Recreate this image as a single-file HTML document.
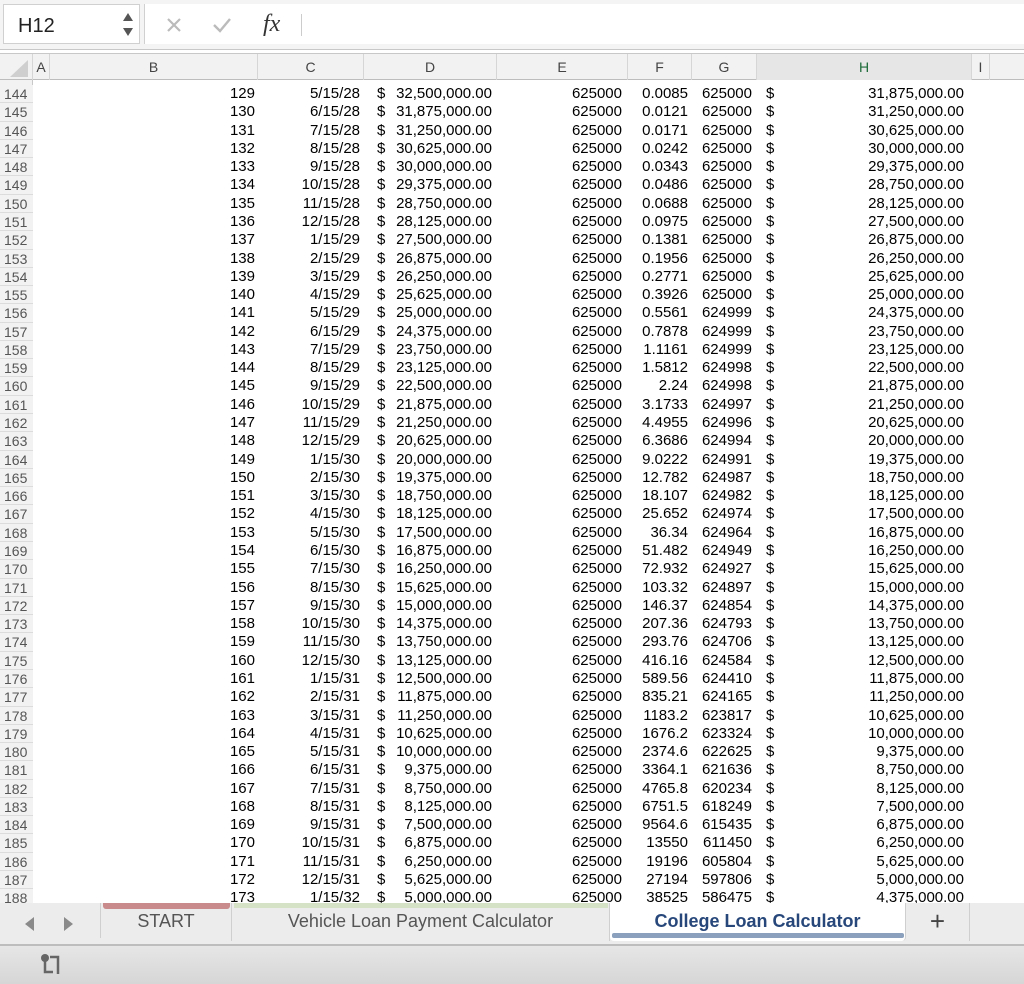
<!DOCTYPE html>
<html><head><meta charset="utf-8"><style>
*{margin:0;padding:0;box-sizing:border-box}
body{width:1024px;height:984px;overflow:hidden;background:#fff;font-family:"Liberation Sans",Arial,sans-serif;position:relative}
#fb{position:absolute;left:0;top:0;width:1024px;height:50px;background:#f4f4f4;border-bottom:1px solid #c8c8c8}
#nb{position:absolute;left:3px;top:4px;width:137px;height:40px;background:#fff;border:1px solid #d0d0d0}
#nb span{position:absolute;left:14px;top:10px;font-size:20px;color:#222}
#fx{position:absolute;left:144px;top:4px;width:880px;height:40px;background:#fff;border-left:1px solid #d0d0d0}
#hdr{position:absolute;left:0;top:53px;width:1024px;height:27px;background:#f2f2f2;border-top:1px solid #c8c8c8;border-bottom:1px solid #bdbdbd}
.ch{position:absolute;top:0;height:26px;line-height:26px;text-align:center;font-size:14px;color:#444;border-right:1px solid #d6d6d6}
#rh{position:absolute;left:0;top:80px;width:33px;height:823px;background:#f2f2f2;border-right:1px solid #c8c8c8}
.r{position:absolute;left:0;width:1024px;height:18.28px;font-size:15px;line-height:18px;color:#000;white-space:pre}
.r span{position:absolute;top:0}
.n{left:0;width:33px;padding-left:4px;color:#555;font-size:14px;border-bottom:1px solid #dcdcdc;height:18.28px;background:#f2f2f2}
.b{left:50px;width:205px;text-align:right}
.c{left:258px;width:102px;text-align:right}
.d1{left:377px}
.d{left:364px;width:128px;text-align:right}
.e{left:497px;width:125px;text-align:right}
.f{left:628px;width:60px;text-align:right}
.g{left:692px;width:60px;text-align:right}
.h1{left:766px}
.h{left:757px;width:207px;text-align:right}
#tabs{position:absolute;left:0;top:903px;width:1024px;height:43px;background:#ececec;border-bottom:2px solid #bdbdbd}
.tab{position:absolute;top:0;height:38px;font-size:18px;color:#555;text-align:center;line-height:36px;border-right:1px solid #cfcfcf}
#status{position:absolute;left:0;top:946px;width:1024px;height:38px;background:linear-gradient(#e6e6e6,#d6d6d6)}
</style></head><body>
<div id="fb">
<div id="nb"><span>H12</span>
<svg style="position:absolute;left:117px;top:6px" width="14" height="28"><path d="M7 2 L12 10 L2 10Z" fill="#555"/><path d="M7 25 L12 17 L2 17Z" fill="#555"/></svg></div>
<div id="fx">
<svg style="position:absolute;left:20px;top:12px" width="18" height="18"><path d="M3 3 L15 15 M15 3 L3 15" stroke="#bbb" stroke-width="2.2"/></svg>
<svg style="position:absolute;left:66px;top:12px" width="22" height="18"><path d="M3 9 L9 15 L19 3" stroke="#bbb" stroke-width="2.4" fill="none"/></svg>
<span style="position:absolute;left:118px;top:7px;font-family:'Liberation Serif',serif;font-style:italic;font-size:24px;color:#333">fx</span>
<div style="position:absolute;left:156px;top:10px;width:1px;height:22px;background:#ccc"></div>
</div></div>
<div id="hdr">
<div class="ch" style="left:0;width:33px"><svg width="33" height="26"><path d="M28 6 L28 23 L10 23Z" fill="#cfcfcf"/></svg></div>
<div class="ch" style="left:33px;width:17px">A</div>
<div class="ch" style="left:50px;width:208px">B</div>
<div class="ch" style="left:258px;width:106px">C</div>
<div class="ch" style="left:364px;width:133px">D</div>
<div class="ch" style="left:497px;width:131px">E</div>
<div class="ch" style="left:628px;width:64px">F</div>
<div class="ch" style="left:692px;width:65px">G</div>
<div class="ch" style="left:757px;width:215px;background:#e6e6e6;color:#1e6b3a">H</div>
<div class="ch" style="left:972px;width:18px">I</div>
</div>
<div id="rh"></div>
<div id="rows" style="position:absolute;left:0;top:85px;width:1024px;height:818px;overflow:hidden">
<div class="r" style="top:0px"><span class="n">144</span><span class="b">129</span><span class="c">5/15/28</span><span class="d1">$</span><span class="d">32,500,000.00</span><span class="e">625000</span><span class="f">0.0085</span><span class="g">625000</span><span class="h1">$</span><span class="h">31,875,000.00</span></div>
<div class="r" style="top:18.28px"><span class="n">145</span><span class="b">130</span><span class="c">6/15/28</span><span class="d1">$</span><span class="d">31,875,000.00</span><span class="e">625000</span><span class="f">0.0121</span><span class="g">625000</span><span class="h1">$</span><span class="h">31,250,000.00</span></div>
<div class="r" style="top:36.56px"><span class="n">146</span><span class="b">131</span><span class="c">7/15/28</span><span class="d1">$</span><span class="d">31,250,000.00</span><span class="e">625000</span><span class="f">0.0171</span><span class="g">625000</span><span class="h1">$</span><span class="h">30,625,000.00</span></div>
<div class="r" style="top:54.84px"><span class="n">147</span><span class="b">132</span><span class="c">8/15/28</span><span class="d1">$</span><span class="d">30,625,000.00</span><span class="e">625000</span><span class="f">0.0242</span><span class="g">625000</span><span class="h1">$</span><span class="h">30,000,000.00</span></div>
<div class="r" style="top:73.12px"><span class="n">148</span><span class="b">133</span><span class="c">9/15/28</span><span class="d1">$</span><span class="d">30,000,000.00</span><span class="e">625000</span><span class="f">0.0343</span><span class="g">625000</span><span class="h1">$</span><span class="h">29,375,000.00</span></div>
<div class="r" style="top:91.4px"><span class="n">149</span><span class="b">134</span><span class="c">10/15/28</span><span class="d1">$</span><span class="d">29,375,000.00</span><span class="e">625000</span><span class="f">0.0486</span><span class="g">625000</span><span class="h1">$</span><span class="h">28,750,000.00</span></div>
<div class="r" style="top:109.68px"><span class="n">150</span><span class="b">135</span><span class="c">11/15/28</span><span class="d1">$</span><span class="d">28,750,000.00</span><span class="e">625000</span><span class="f">0.0688</span><span class="g">625000</span><span class="h1">$</span><span class="h">28,125,000.00</span></div>
<div class="r" style="top:127.96px"><span class="n">151</span><span class="b">136</span><span class="c">12/15/28</span><span class="d1">$</span><span class="d">28,125,000.00</span><span class="e">625000</span><span class="f">0.0975</span><span class="g">625000</span><span class="h1">$</span><span class="h">27,500,000.00</span></div>
<div class="r" style="top:146.24px"><span class="n">152</span><span class="b">137</span><span class="c">1/15/29</span><span class="d1">$</span><span class="d">27,500,000.00</span><span class="e">625000</span><span class="f">0.1381</span><span class="g">625000</span><span class="h1">$</span><span class="h">26,875,000.00</span></div>
<div class="r" style="top:164.52px"><span class="n">153</span><span class="b">138</span><span class="c">2/15/29</span><span class="d1">$</span><span class="d">26,875,000.00</span><span class="e">625000</span><span class="f">0.1956</span><span class="g">625000</span><span class="h1">$</span><span class="h">26,250,000.00</span></div>
<div class="r" style="top:182.8px"><span class="n">154</span><span class="b">139</span><span class="c">3/15/29</span><span class="d1">$</span><span class="d">26,250,000.00</span><span class="e">625000</span><span class="f">0.2771</span><span class="g">625000</span><span class="h1">$</span><span class="h">25,625,000.00</span></div>
<div class="r" style="top:201.08px"><span class="n">155</span><span class="b">140</span><span class="c">4/15/29</span><span class="d1">$</span><span class="d">25,625,000.00</span><span class="e">625000</span><span class="f">0.3926</span><span class="g">625000</span><span class="h1">$</span><span class="h">25,000,000.00</span></div>
<div class="r" style="top:219.36px"><span class="n">156</span><span class="b">141</span><span class="c">5/15/29</span><span class="d1">$</span><span class="d">25,000,000.00</span><span class="e">625000</span><span class="f">0.5561</span><span class="g">624999</span><span class="h1">$</span><span class="h">24,375,000.00</span></div>
<div class="r" style="top:237.64px"><span class="n">157</span><span class="b">142</span><span class="c">6/15/29</span><span class="d1">$</span><span class="d">24,375,000.00</span><span class="e">625000</span><span class="f">0.7878</span><span class="g">624999</span><span class="h1">$</span><span class="h">23,750,000.00</span></div>
<div class="r" style="top:255.92px"><span class="n">158</span><span class="b">143</span><span class="c">7/15/29</span><span class="d1">$</span><span class="d">23,750,000.00</span><span class="e">625000</span><span class="f">1.1161</span><span class="g">624999</span><span class="h1">$</span><span class="h">23,125,000.00</span></div>
<div class="r" style="top:274.2px"><span class="n">159</span><span class="b">144</span><span class="c">8/15/29</span><span class="d1">$</span><span class="d">23,125,000.00</span><span class="e">625000</span><span class="f">1.5812</span><span class="g">624998</span><span class="h1">$</span><span class="h">22,500,000.00</span></div>
<div class="r" style="top:292.48px"><span class="n">160</span><span class="b">145</span><span class="c">9/15/29</span><span class="d1">$</span><span class="d">22,500,000.00</span><span class="e">625000</span><span class="f">2.24</span><span class="g">624998</span><span class="h1">$</span><span class="h">21,875,000.00</span></div>
<div class="r" style="top:310.76px"><span class="n">161</span><span class="b">146</span><span class="c">10/15/29</span><span class="d1">$</span><span class="d">21,875,000.00</span><span class="e">625000</span><span class="f">3.1733</span><span class="g">624997</span><span class="h1">$</span><span class="h">21,250,000.00</span></div>
<div class="r" style="top:329.04px"><span class="n">162</span><span class="b">147</span><span class="c">11/15/29</span><span class="d1">$</span><span class="d">21,250,000.00</span><span class="e">625000</span><span class="f">4.4955</span><span class="g">624996</span><span class="h1">$</span><span class="h">20,625,000.00</span></div>
<div class="r" style="top:347.32px"><span class="n">163</span><span class="b">148</span><span class="c">12/15/29</span><span class="d1">$</span><span class="d">20,625,000.00</span><span class="e">625000</span><span class="f">6.3686</span><span class="g">624994</span><span class="h1">$</span><span class="h">20,000,000.00</span></div>
<div class="r" style="top:365.6px"><span class="n">164</span><span class="b">149</span><span class="c">1/15/30</span><span class="d1">$</span><span class="d">20,000,000.00</span><span class="e">625000</span><span class="f">9.0222</span><span class="g">624991</span><span class="h1">$</span><span class="h">19,375,000.00</span></div>
<div class="r" style="top:383.88px"><span class="n">165</span><span class="b">150</span><span class="c">2/15/30</span><span class="d1">$</span><span class="d">19,375,000.00</span><span class="e">625000</span><span class="f">12.782</span><span class="g">624987</span><span class="h1">$</span><span class="h">18,750,000.00</span></div>
<div class="r" style="top:402.16px"><span class="n">166</span><span class="b">151</span><span class="c">3/15/30</span><span class="d1">$</span><span class="d">18,750,000.00</span><span class="e">625000</span><span class="f">18.107</span><span class="g">624982</span><span class="h1">$</span><span class="h">18,125,000.00</span></div>
<div class="r" style="top:420.44px"><span class="n">167</span><span class="b">152</span><span class="c">4/15/30</span><span class="d1">$</span><span class="d">18,125,000.00</span><span class="e">625000</span><span class="f">25.652</span><span class="g">624974</span><span class="h1">$</span><span class="h">17,500,000.00</span></div>
<div class="r" style="top:438.72px"><span class="n">168</span><span class="b">153</span><span class="c">5/15/30</span><span class="d1">$</span><span class="d">17,500,000.00</span><span class="e">625000</span><span class="f">36.34</span><span class="g">624964</span><span class="h1">$</span><span class="h">16,875,000.00</span></div>
<div class="r" style="top:457px"><span class="n">169</span><span class="b">154</span><span class="c">6/15/30</span><span class="d1">$</span><span class="d">16,875,000.00</span><span class="e">625000</span><span class="f">51.482</span><span class="g">624949</span><span class="h1">$</span><span class="h">16,250,000.00</span></div>
<div class="r" style="top:475.28px"><span class="n">170</span><span class="b">155</span><span class="c">7/15/30</span><span class="d1">$</span><span class="d">16,250,000.00</span><span class="e">625000</span><span class="f">72.932</span><span class="g">624927</span><span class="h1">$</span><span class="h">15,625,000.00</span></div>
<div class="r" style="top:493.56px"><span class="n">171</span><span class="b">156</span><span class="c">8/15/30</span><span class="d1">$</span><span class="d">15,625,000.00</span><span class="e">625000</span><span class="f">103.32</span><span class="g">624897</span><span class="h1">$</span><span class="h">15,000,000.00</span></div>
<div class="r" style="top:511.84px"><span class="n">172</span><span class="b">157</span><span class="c">9/15/30</span><span class="d1">$</span><span class="d">15,000,000.00</span><span class="e">625000</span><span class="f">146.37</span><span class="g">624854</span><span class="h1">$</span><span class="h">14,375,000.00</span></div>
<div class="r" style="top:530.12px"><span class="n">173</span><span class="b">158</span><span class="c">10/15/30</span><span class="d1">$</span><span class="d">14,375,000.00</span><span class="e">625000</span><span class="f">207.36</span><span class="g">624793</span><span class="h1">$</span><span class="h">13,750,000.00</span></div>
<div class="r" style="top:548.4px"><span class="n">174</span><span class="b">159</span><span class="c">11/15/30</span><span class="d1">$</span><span class="d">13,750,000.00</span><span class="e">625000</span><span class="f">293.76</span><span class="g">624706</span><span class="h1">$</span><span class="h">13,125,000.00</span></div>
<div class="r" style="top:566.68px"><span class="n">175</span><span class="b">160</span><span class="c">12/15/30</span><span class="d1">$</span><span class="d">13,125,000.00</span><span class="e">625000</span><span class="f">416.16</span><span class="g">624584</span><span class="h1">$</span><span class="h">12,500,000.00</span></div>
<div class="r" style="top:584.96px"><span class="n">176</span><span class="b">161</span><span class="c">1/15/31</span><span class="d1">$</span><span class="d">12,500,000.00</span><span class="e">625000</span><span class="f">589.56</span><span class="g">624410</span><span class="h1">$</span><span class="h">11,875,000.00</span></div>
<div class="r" style="top:603.24px"><span class="n">177</span><span class="b">162</span><span class="c">2/15/31</span><span class="d1">$</span><span class="d">11,875,000.00</span><span class="e">625000</span><span class="f">835.21</span><span class="g">624165</span><span class="h1">$</span><span class="h">11,250,000.00</span></div>
<div class="r" style="top:621.52px"><span class="n">178</span><span class="b">163</span><span class="c">3/15/31</span><span class="d1">$</span><span class="d">11,250,000.00</span><span class="e">625000</span><span class="f">1183.2</span><span class="g">623817</span><span class="h1">$</span><span class="h">10,625,000.00</span></div>
<div class="r" style="top:639.8px"><span class="n">179</span><span class="b">164</span><span class="c">4/15/31</span><span class="d1">$</span><span class="d">10,625,000.00</span><span class="e">625000</span><span class="f">1676.2</span><span class="g">623324</span><span class="h1">$</span><span class="h">10,000,000.00</span></div>
<div class="r" style="top:658.08px"><span class="n">180</span><span class="b">165</span><span class="c">5/15/31</span><span class="d1">$</span><span class="d">10,000,000.00</span><span class="e">625000</span><span class="f">2374.6</span><span class="g">622625</span><span class="h1">$</span><span class="h">9,375,000.00</span></div>
<div class="r" style="top:676.36px"><span class="n">181</span><span class="b">166</span><span class="c">6/15/31</span><span class="d1">$</span><span class="d">9,375,000.00</span><span class="e">625000</span><span class="f">3364.1</span><span class="g">621636</span><span class="h1">$</span><span class="h">8,750,000.00</span></div>
<div class="r" style="top:694.64px"><span class="n">182</span><span class="b">167</span><span class="c">7/15/31</span><span class="d1">$</span><span class="d">8,750,000.00</span><span class="e">625000</span><span class="f">4765.8</span><span class="g">620234</span><span class="h1">$</span><span class="h">8,125,000.00</span></div>
<div class="r" style="top:712.92px"><span class="n">183</span><span class="b">168</span><span class="c">8/15/31</span><span class="d1">$</span><span class="d">8,125,000.00</span><span class="e">625000</span><span class="f">6751.5</span><span class="g">618249</span><span class="h1">$</span><span class="h">7,500,000.00</span></div>
<div class="r" style="top:731.2px"><span class="n">184</span><span class="b">169</span><span class="c">9/15/31</span><span class="d1">$</span><span class="d">7,500,000.00</span><span class="e">625000</span><span class="f">9564.6</span><span class="g">615435</span><span class="h1">$</span><span class="h">6,875,000.00</span></div>
<div class="r" style="top:749.48px"><span class="n">185</span><span class="b">170</span><span class="c">10/15/31</span><span class="d1">$</span><span class="d">6,875,000.00</span><span class="e">625000</span><span class="f">13550</span><span class="g">611450</span><span class="h1">$</span><span class="h">6,250,000.00</span></div>
<div class="r" style="top:767.76px"><span class="n">186</span><span class="b">171</span><span class="c">11/15/31</span><span class="d1">$</span><span class="d">6,250,000.00</span><span class="e">625000</span><span class="f">19196</span><span class="g">605804</span><span class="h1">$</span><span class="h">5,625,000.00</span></div>
<div class="r" style="top:786.04px"><span class="n">187</span><span class="b">172</span><span class="c">12/15/31</span><span class="d1">$</span><span class="d">5,625,000.00</span><span class="e">625000</span><span class="f">27194</span><span class="g">597806</span><span class="h1">$</span><span class="h">5,000,000.00</span></div>
<div class="r" style="top:804.32px"><span class="n">188</span><span class="b">173</span><span class="c">1/15/32</span><span class="d1">$</span><span class="d">5,000,000.00</span><span class="e">625000</span><span class="f">38525</span><span class="g">586475</span><span class="h1">$</span><span class="h">4,375,000.00</span></div>
</div>
<div id="tabs">
<svg style="position:absolute;left:22px;top:12px" width="60" height="18"><path d="M12 2 L12 16 L3 9Z" fill="#8a8a8a"/><path d="M42 2 L42 16 L51 9Z" fill="#8a8a8a"/></svg>
<div style="position:absolute;left:100px;top:0;width:1px;height:35px;background:#cfcfcf"></div>
<div class="tab" style="left:101px;width:131px"><div style="position:absolute;left:2px;top:0;width:127px;height:6px;background:#c98b8b;border-radius:0 0 3px 3px"></div>START</div>
<div class="tab" style="left:232px;width:378px"><div style="position:absolute;left:2px;top:0;width:374px;height:5px;background:#d6e2c6"></div>Vehicle Loan Payment Calculator</div>
<div class="tab" style="left:610px;width:296px;background:#fff;color:#27477a;font-weight:bold;font-size:18px;border-radius:0 0 4px 4px"><div style="position:absolute;left:2px;top:30px;width:292px;height:5px;background:#8aa0bc;border-radius:2px"></div>College Loan Calculator</div>
<div class="tab" style="left:906px;width:64px;font-size:26px;color:#444">+</div>
</div>
<div id="status">
<svg style="position:absolute;left:38px;top:6px" width="28" height="26"><circle cx="7" cy="6" r="4" fill="#666"/><path d="M7 8 V20 H15 M12 5 H20 V22" stroke="#666" stroke-width="2.5" fill="none"/></svg>
</div>
</body></html>
